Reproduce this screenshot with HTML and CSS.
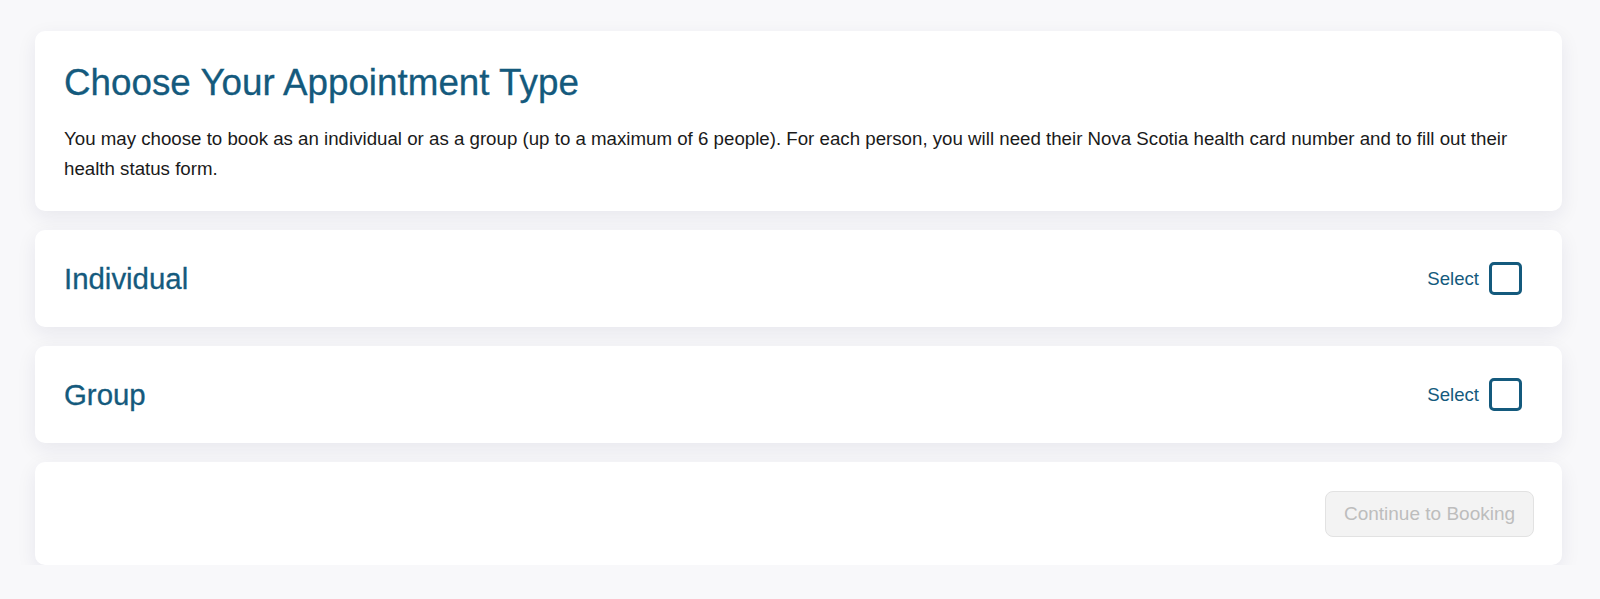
FILE: index.html
```html
<!DOCTYPE html>
<html lang="en">
<head>
<meta charset="utf-8">
<title>Choose Your Appointment Type</title>
<link rel="stylesheet" href="styles.css">
</head>
<body>
<main class="page">
  <section class="card intro">
    <h1 class="title">Choose Your Appointment Type</h1>
    <p class="desc">You may choose to book as an individual or as a group (up to a maximum of 6 people). For each person, you will need their Nova Scotia health card number and to fill out their health status form.</p>
  </section>
  <section class="card option">
    <h2 class="option-title">Individual</h2>
    <label class="select"><span>Select</span><span class="box"></span></label>
  </section>
  <section class="card option">
    <h2 class="option-title">Group</h2>
    <label class="select"><span>Select</span><span class="box"></span></label>
  </section>
  <section class="card footer">
    <button class="continue" disabled>Continue to Booking</button>
  </section>
</main>
</body>
</html>
```
FILE: styles.css
```css
html, body {
  margin: 0;
  padding: 0;
  background: #f8f8fa;
  font-family: "Liberation Sans", Arial, Helvetica, sans-serif;
}
.page {
  width: 1527px;
  padding: 31px 0 0 35px;
  display: flex;
  flex-direction: column;
  gap: 19px;
}
.card {
  background: #ffffff;
  border-radius: 10px;
  box-shadow: 0 6px 20px rgba(30, 30, 80, 0.075);
}
.intro {
  padding: 30px 29px 28px;
}
.title {
  margin: 0;
  font-size: 36.8px;
  font-weight: 400;
  color: #145a7d;
  line-height: 44px;
  -webkit-text-stroke: 0.3px #145a7d;
}
.desc {
  margin: 19px 0 0;
  font-size: 18.7px;
  line-height: 29.6px;
  color: #1a1a1a;
}
.option {
  height: 97px;
  padding: 0 40px 0 29px;
  display: flex;
  align-items: center;
  justify-content: space-between;
}
.option-title {
  margin: 0;
  font-size: 29.4px;
  font-weight: 400;
  color: #145a7d;
  -webkit-text-stroke: 0.3px #145a7d;
}
.select {
  display: flex;
  align-items: center;
  gap: 10px;
  font-size: 18.6px;
  color: #145a7d;
}
.box {
  width: 27px;
  height: 27px;
  border: 3px solid #145a7d;
  border-radius: 5px;
}
.footer {
  height: 103px;
  padding: 0 28px;
  display: flex;
  align-items: center;
  justify-content: flex-end;
}
.continue {
  width: 209px;
  height: 46px;
  border: 1px solid #e2e2e2;
  border-radius: 8px;
  background: #f3f3f3;
  color: #bdbdbd;
  font-family: "Liberation Sans", Arial, Helvetica, sans-serif;
  font-size: 19px;
}
```
